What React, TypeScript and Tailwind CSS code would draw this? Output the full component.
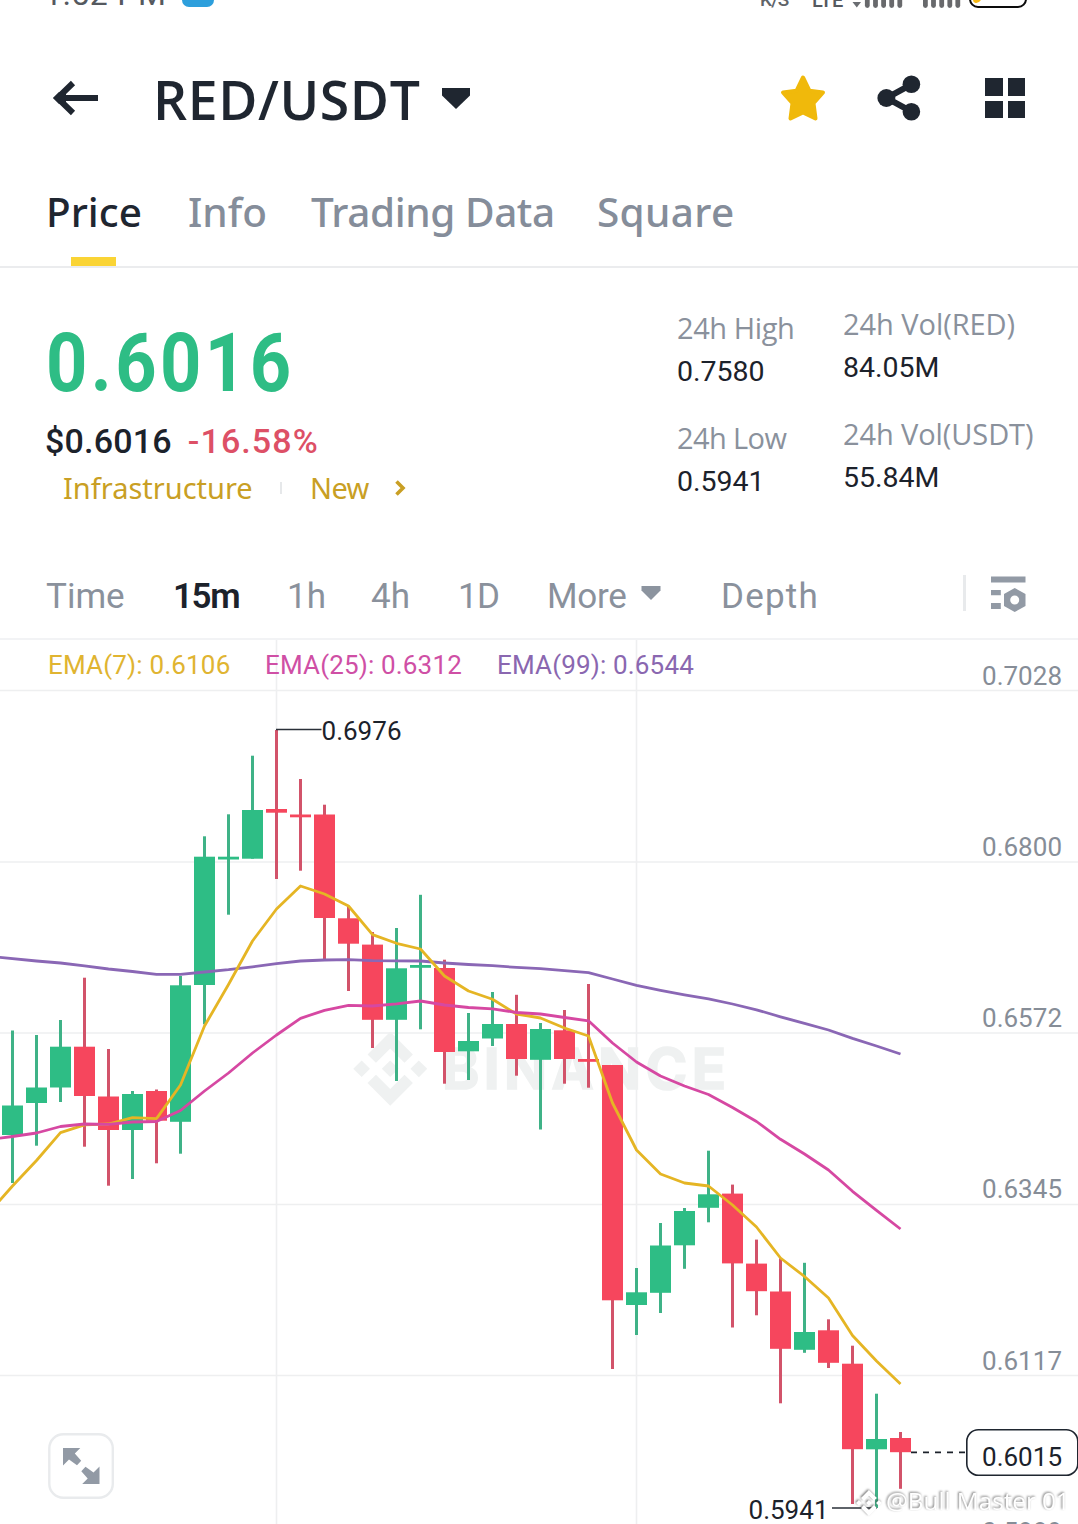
type Candle = { up: boolean; high: number; top: number; bottom: number; low: number };

const g = (high: number, top: number, bottom: number, low: number): Candle => ({ up: true, high, top, bottom, low });
const r = (high: number, top: number, bottom: number, low: number): Candle => ({ up: false, high, top, bottom, low });

const CANDLES: Candle[] = [
  g(1030.5, 1105.5, 1135, 1183), g(1035, 1087.5, 1103, 1145.7), g(1020, 1046.7, 1087.5, 1102), r(977.7, 1046.7, 1096, 1146.7),
  r(1049, 1096.5, 1130, 1185.7), g(1091, 1094, 1130, 1179), r(1089.5, 1091, 1120.7, 1163.3), g(976, 985.3, 1121.8, 1153.7),
  g(836.3, 856.7, 985, 1024.3), g(814.3, 856.7, 859.5, 914.7), g(755.7, 810, 858.7, 858.7), r(730, 809, 812.7, 879),
  r(779, 814.5, 817.3, 870.7), r(804.7, 814.5, 918, 959.3), r(906, 918.3, 943.7, 991), r(932, 944.6, 1019.8, 1048),
  g(928, 968.3, 1019.8, 1081), g(894.8, 965, 967.8, 1029.3), r(959.7, 968, 1052, 1083.7), g(1013, 1041, 1051.3, 1080),
  g(992, 1024, 1038.5, 1046), r(994.8, 1024, 1059, 1075.7), g(1023, 1029, 1059.8, 1129.5), r(1010, 1030.3, 1059, 1083.7),
  r(984, 1059, 1061.8, 1087.7), r(1065, 1065, 1300.3, 1369), g(1268, 1292.3, 1305, 1335), g(1223, 1245.5, 1292.8, 1313),
  g(1208, 1211, 1245.3, 1268.8), g(1150.7, 1194.3, 1207.8, 1222.3), r(1184.6, 1193.6, 1263.4, 1327.5), r(1239.6, 1263.6, 1291.2, 1315.3),
  r(1258.3, 1291.5, 1348.8, 1403.3), g(1262.8, 1332, 1349.8, 1352.8), r(1319.3, 1330.3, 1362.8, 1368), r(1345.7, 1363.7, 1449.2, 1504),
  g(1393.7, 1439, 1449.3, 1508), r(1432, 1438, 1452.2, 1488.8),
];

const EMA7 =
  "-2,1202.5 12.5,1186 36.5,1160.5 60.5,1132.7 84.5,1124.8 108.5,1124 132.5,1117.6 156.5,1118.6 180.5,1085 204.5,1026 228.5,984.5 252.5,941 276.5,909 300.5,886 324.5,894 348.5,906 372.5,934.6 396.5,943.3 420.5,949 444.5,976 468.5,991 492.5,999.3 516.5,1014 540.5,1018 564.5,1028 588.5,1036 612.5,1103 636.5,1150 660.5,1174 684.5,1183 708.5,1186 732.5,1205 756.5,1227 780.5,1258 804.5,1276.5 828.5,1298 852.5,1335.5 876.5,1361 900.5,1384";
const EMA25 =
  "-2,1138.3 12.5,1136.5 36.5,1133 60.5,1126.5 84.5,1124 108.5,1124.3 132.5,1122 156.5,1121.5 180.5,1110.5 204.5,1091 228.5,1073 252.5,1053 276.5,1035 300.5,1018.3 324.5,1010.3 348.5,1005.3 372.5,1006 396.5,1003.8 420.5,1001 444.5,1005 468.5,1007.5 492.5,1008.8 516.5,1012.5 540.5,1014 564.5,1017.5 588.5,1020.8 612.5,1043 636.5,1062 660.5,1076 684.5,1086 708.5,1094.5 732.5,1107.5 756.5,1121.5 780.5,1139.3 804.5,1154 828.5,1170 852.5,1191.3 876.5,1210.3 900.5,1229";
const EMA99 =
  "-2,957.2 36.5,961 60.5,963 84.5,965.8 108.5,969 132.5,971.5 156.5,974.3 180.5,974.4 204.5,972 228.5,969.7 252.5,966.8 276.5,963.7 300.5,961 324.5,960 348.5,959.7 372.5,960.7 420.5,961 444.5,963 468.5,964.5 492.5,965.7 516.5,967.4 540.5,968.7 564.5,970.6 588.5,972.6 612.5,979 636.5,985.3 660.5,990.3 684.5,994.8 708.5,998.8 732.5,1004 756.5,1009.8 780.5,1016.8 804.5,1023.3 828.5,1030 852.5,1038.4 876.5,1046 900.5,1054";

const GRID_Y = [690.5, 862, 1033, 1204.5, 1375.5];
const AXIS: [string, number][] = [
  ["0.7028", 685], ["0.6800", 856], ["0.6572", 1027], ["0.6345", 1198], ["0.6117", 1370], ["0.5889", 1541],
];

const BINANCE_MARK =
  "M16.624 13.9202l2.7175 2.7154-7.353 7.353-7.353-7.352 2.7175-2.7164 4.6355 4.6595 4.6356-4.6595zm4.6366-4.6366L24 12l-2.7154 2.7164L18.5682 12l2.6924-2.7164zm-9.272.001l2.7163 2.6914-2.7164 2.7174v-.001L9.2721 12l2.7164-2.7154zm-9.2722-.001L5.4088 12l-2.6914 2.6924L0 12l2.7164-2.7164zM11.9885.0115l7.353 7.329-2.7174 2.7154-4.6356-4.6356-4.6355 4.6595-2.7174-2.7154 7.353-7.353z";

function StatusBar() {
  return (
    <div className="flex h-[54px] items-start">
      <div className="-mt-[26px] flex h-10 w-full items-center">
        <span className="ml-[44px] w-[138px] text-[32px] leading-10 tracking-[0.7px] whitespace-nowrap text-[#55595f]">1:52 PM</span>
        <span className="h-[26px] w-8 rounded-[7px] bg-[#2d9fdc]" />
        <span className="ml-[546px] w-[52px] pt-[11px] text-[19px] leading-10 font-medium tracking-[-0.8px] text-[#606469]">K/S</span>
        <span className="w-[40px] pt-[12px] text-[20px] leading-10 font-medium tracking-[-0.3px] text-[#55595f]">LTE</span>
        <svg className="h-[27px] w-[176px]" viewBox="852 -20 176 27" overflow="visible">
          <path d="M852.5 1h8.5l-4.2 5.4z" fill="#6a6d71" />
          {[867.3, 875.5, 883.6, 891.7, 899.8, 925.4, 933.5, 941.7, 949.8, 957.8].map((x) => (
            <path key={x} d={`M${x} -12V4.5`} stroke="#68696c" strokeWidth="4.8" strokeLinecap="round" />
          ))}
          <rect x="970" y="-20" width="56" height="26" rx="8" fill="#fff" stroke="#0c0c0c" strokeWidth="2" />
          <path d="M973 -10H981V-1Q978.500 2.500 975.500 2Q973 1.500 973 -1Z" fill="#f7b914" />
        </svg>
      </div>
    </div>
  );
}

function Header() {
  return (
    <header className="flex h-[88px] items-center text-[#1f2630]">
      <svg className="ml-[52px] h-[36px] w-[48px]" viewBox="52 80 48 36">
        <path d="M73 83L57.500 98L73 113M58 98H98" fill="none" stroke="#1f2630" strokeWidth="6" />
        <path d="M53 98L59 92H66V104H59Z" fill="#1f2630" />
      </svg>
      <h1 className="ml-[53px] w-[289px] pt-[3px] font-['Open_Sans'] text-[53.5px] leading-[64px] font-semibold tracking-[0.6px] whitespace-nowrap">
        RED/USDT
      </h1>
      <svg className="h-[22px] w-[28px]" viewBox="442 87 28 22">
        <path d="M442 88H470V95.500L456 109L442 95.500Z" fill="#1f2630" />
      </svg>
      <svg className="ml-[310px] h-[48px] w-[46px]" viewBox="780 75 46 48">
        <path
          d="M803 78.500L809.500 91.800L823 93.500L813.500 104.300L815.500 119.500L803 113.500L790.500 119.500L792.500 104.300L783 93.500L796.500 91.800Z"
          fill="#f0b90b" stroke="#f0b90b" strokeWidth="4" strokeLinejoin="round"
        />
      </svg>
      <svg className="ml-[50px] h-[48px] w-[46px]" viewBox="876 74 46 48">
        <path d="M911.300 84.500L886.500 98L911.300 111.500" fill="none" stroke="#1f2630" strokeWidth="6" />
        <circle cx="886.400" cy="98" r="9" fill="#1f2630" />
        <circle cx="911.400" cy="84.200" r="8.800" fill="#1f2630" />
        <circle cx="911.400" cy="111.800" r="8.800" fill="#1f2630" />
      </svg>
      <div className="ml-[63px] grid grid-cols-2 gap-x-[5px] gap-y-[5px]">
        {[0, 1, 2, 3].map((n) => (
          <span key={n} className="size-[17.5px] bg-[#1f2630]" />
        ))}
      </div>
    </header>
  );
}

function Tabs() {
  return (
    <nav className="flex h-[126px] border-b-2 border-[#ebecee] pt-[46px] pl-[46px] font-['Noto_Sans'] text-[40.5px] leading-[48px] font-medium whitespace-nowrap text-[#858d9a]">
      <div className="flex w-[142px] flex-col text-[#1f2630]">
        Price
        <span className="mt-auto ml-[25px] h-[9px] w-[45px] bg-[#fad435]" />
      </div>
      <div className="w-[123px]">Info</div>
      <div className="w-[286px] tracking-[-0.42px]">Trading Data</div>
      <div className="tracking-[0.35px]">Square</div>
    </nav>
  );
}

function Stat({ label, value, tracking }: { label: string; value: string; tracking: string }) {
  return (
    <div>
      <div className={`font-['Open_Sans'] text-[29px] leading-10 text-[#8a919c] ${tracking}`}>{label}</div>
      <div className="mt-[4px] text-[28.5px] leading-10 text-[#1c222b]">{value}</div>
    </div>
  );
}

function Summary() {
  return (
    <section className="flex h-[285px] whitespace-nowrap">
      <div className="w-[631px] pt-[55px] pl-[46px]">
        <div className="w-fit origin-left scale-x-[0.88] text-[82px] leading-[80px] font-bold tracking-[3.9px] text-[#2ebd85]">
          0.6016
        </div>
        <div className="mt-[18px] flex gap-[16px] text-[34px] leading-10 font-medium">
          <span className="-ml-px tracking-[0.2px] text-[#1c222b]">$0.6016</span>
          <span className="tracking-[1.1px] text-[#dd5066]">-16.58%</span>
        </div>
        <div className="mt-[9px] flex items-center pl-[17px] font-['Noto_Sans'] text-[29px] leading-9 text-[#c99f24]">
          <span className="w-[217px]">Infrastructure</span>
          <span className="h-3 w-[2px] bg-[#e6e8ea]" />
          <span className="ml-[28px] w-[84px] tracking-[-0.6px]">New</span>
          <svg className="h-[18px] w-[14px]" viewBox="0 0 14 18">
            <path d="M2.500 2.500L9 9L2.500 15.500" fill="none" stroke="#c99f24" strokeWidth="3.600" />
          </svg>
        </div>
      </div>
      <div className="flex w-[166px] flex-col gap-[26px] pt-[39.5px] pl-[46px]">
        <Stat label="24h High" value="0.7580" tracking="tracking-[-0.42px]" />
        <Stat label="24h Low" value="0.5941" tracking="tracking-[-0.6px]" />
      </div>
      <div className="flex flex-col gap-[26px] pt-[36px] pl-[46px]">
        <Stat label="24h Vol(RED)" value="84.05M" tracking="tracking-[-0.05px]" />
        <Stat label="24h Vol(USDT)" value="55.84M" tracking="tracking-[-0.1px]" />
      </div>
    </section>
  );
}

function Intervals() {
  return (
    <div className="flex h-[87px] items-center border-b-2 border-[#f2f3f5] pt-[2px] pl-[46px] text-[35px] leading-10 whitespace-nowrap text-[#8a919c]">
      <span className="w-[127px]">Time</span>
      <span className="w-[114px] font-semibold tracking-[-1.4px] text-[#1c222b]">15m</span>
      <span className="w-[84px]">1h</span>
      <span className="w-[87px]">4h</span>
      <span className="w-[89px] tracking-[-0.6px]">1D</span>
      <span className="w-[94px] tracking-[-0.3px]">More</span>
      <svg className="-mt-[7px] h-[14px] w-[20px]" viewBox="641 586 20 14">
        <path d="M641.500 586H660.500V590.500L651 600L641.500 590.500Z" fill="#8c949f" />
      </svg>
      <span className="ml-[60px] w-[242px] tracking-[1.2px]">Depth</span>
      <span className="-mt-[7px] h-9 w-[2.500px] bg-[#e8eaec]" />
      <svg className="-mt-[5px] ml-[24px] h-[38px] w-[37px]" viewBox="990 575 37 38">
        <path d="M991 576.500h34.500v6H991zM991 590h9.800v5.300H991zM991 603h9.800v6H991z" fill="#929aa5" />
        <path
          d="M1014.700 588L1025.500 594V606L1014.700 612L1004 606V594ZM1014.700 595.500a4.500 4.500 0 1 0 0 9a4.500 4.500 0 1 0 0-9Z"
          fill="#929aa5" fillRule="evenodd"
        />
      </svg>
    </div>
  );
}

function Chart() {
  return (
    <svg className="block h-[884px] w-[1078px] font-['Roboto']" viewBox="0 640 1078 884">
      <g stroke="#eeeff0" strokeWidth="1.600">
        {GRID_Y.map((y) => (
          <path key={y} d={`M0 ${y}H1078`} />
        ))}
        <path d="M276.500 640V1524M636.500 640V1524" />
      </g>

      <g fill="#eff1f1">
        <path d={BINANCE_MARK} transform="translate(353.300 1031.800) scale(3.080)" />
        <text
          x="442" y="1089" fontSize="56.500" fontWeight="700" textLength="284"
          stroke="#eff1f1" strokeWidth="1.600" className="font-['Inter']"
        >
          BINANCE
        </text>
      </g>

      {CANDLES.map((c, i) => {
        const x = 12.5 + i * 24;
        return (
          <g key={i}>
            <path d={`M${x} ${c.high}V${c.low}`} stroke={c.up ? "#3fb287" : "#d2536a"} strokeWidth="3" />
            <rect x={x - 10.5} y={c.top} width="21" height={c.bottom - c.top} fill={c.up ? "#2ebd85" : "#f6465d"} />
          </g>
        );
      })}

      <g fill="none" strokeWidth="2.800" strokeLinejoin="round">
        <polyline points={EMA99} stroke="#8a67b5" />
        <polyline points={EMA7} stroke="#e5b524" />
        <polyline points={EMA25} stroke="#d648a2" />
      </g>

      <g fontSize="26">
        <text x="48" y="674" textLength="182.300" fill="#e0b431">EMA(7): 0.6106</text>
        <text x="265" y="674" textLength="196.800" fill="#cf4fa5">EMA(25): 0.6312</text>
        <text x="497" y="674" textLength="196.800" fill="#8a67b0">EMA(99): 0.6544</text>
        {AXIS.map(([label, y]) => (
          <text key={label} x="982" y={y} textLength="80" fill="#868d97">{label}</text>
        ))}
        <text x="321.500" y="740" textLength="80" fill="#1c222b">0.6976</text>
        <text x="748.500" y="1518.700" textLength="80" fill="#1c222b">0.5941</text>
      </g>

      <path d="M276 729.500H321.500M832 1508H877" stroke="#2a3038" strokeWidth="1.600" />
      <path d="M911 1452.300H966" stroke="#1c222b" strokeWidth="1.700" strokeDasharray="6 6" />
      <rect x="966.800" y="1429.800" width="111" height="45.500" rx="11.500" fill="#fff" stroke="#1f2630" strokeWidth="1.600" />
      <text x="982" y="1465.800" fontSize="26" textLength="80" fill="#1c222b">0.6015</text>

      <rect x="49.300" y="1434.300" width="63.500" height="63.500" rx="14" fill="#fff" stroke="#e9ebed" strokeWidth="2.400" />
      <g fill="#929aa5">
        <path d="M63 1448H80.300L74.800 1453.500L81.200 1460.800L77 1465.300L69 1459.500L63 1465.500Z" />
        <path d="M99.500 1484H82.200L87.700 1478.500L81.300 1471.200L85.500 1466.700L93.500 1472.500L99.500 1466.500Z" />
      </g>

      <g fill="#fff" className="drop-shadow-[-0.3px_-0.3px_0.8px_rgba(60,60,60,0.65)]">
        <path d={BINANCE_MARK} transform="translate(856 1490) scale(1.080)" />
        <text x="886" y="1509.500" fontSize="24.500" textLength="184" className="font-['Open_Sans']">
          @Bull Master 01
        </text>
      </g>
    </svg>
  );
}

export default function App() {
  return (
    <main className="h-[1524px] w-[1078px] overflow-hidden bg-white font-['Roboto',sans-serif]">
      <StatusBar />
      <Header />
      <Tabs />
      <Summary />
      <Intervals />
      <Chart />
    </main>
  );
}
